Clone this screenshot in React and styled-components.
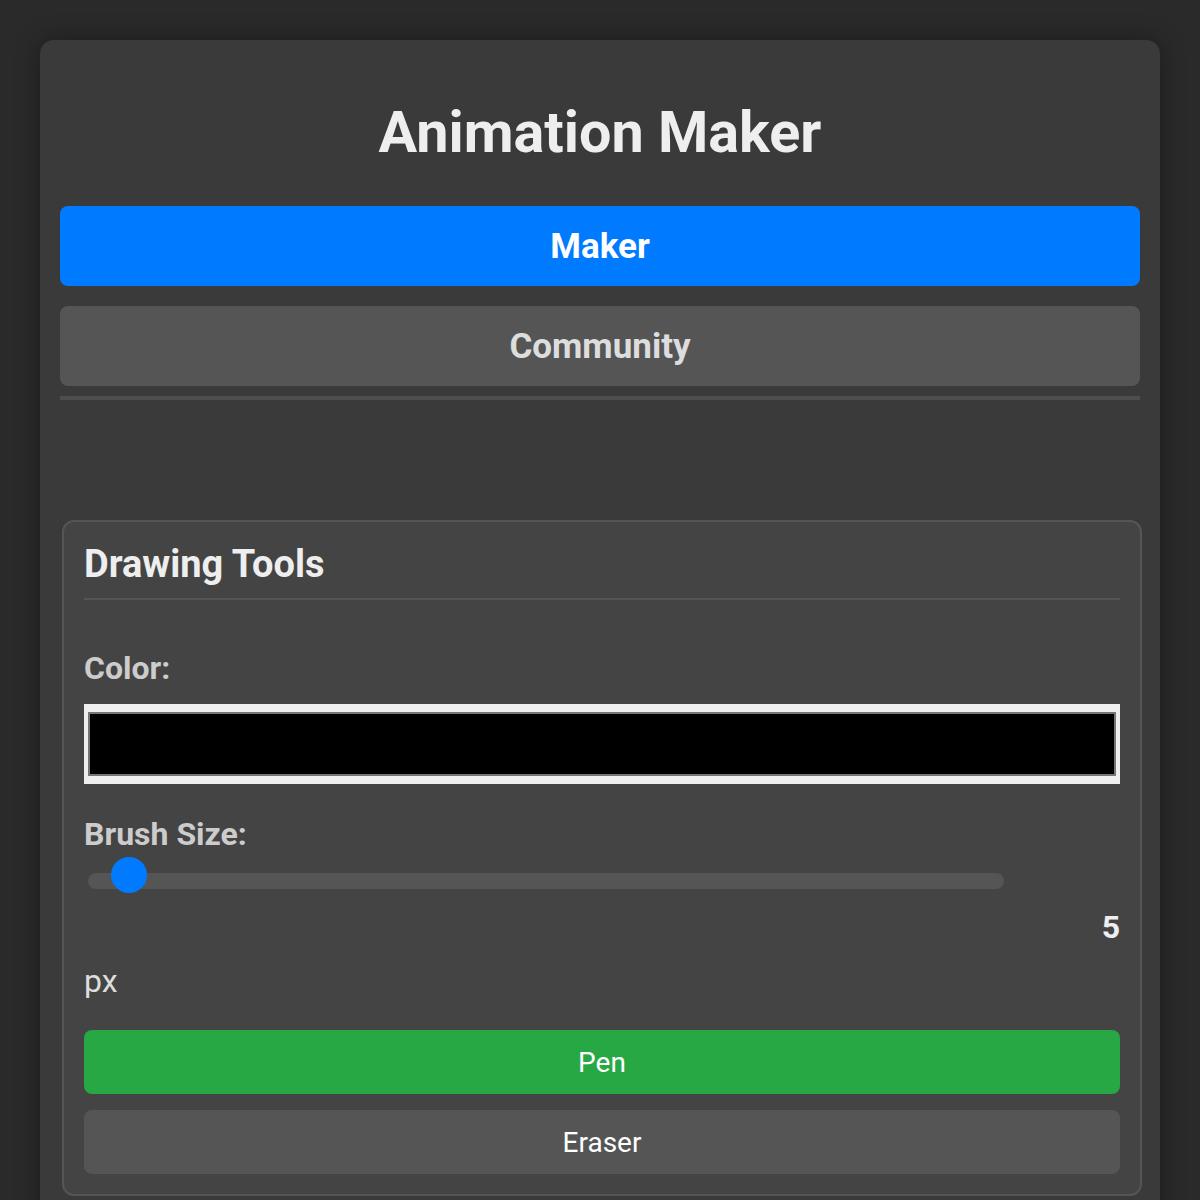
import React, { useState } from 'react';
import styled, { createGlobalStyle } from 'styled-components';

const GlobalStyle = createGlobalStyle`
  body {
    margin: 0;
    background-color: #2a2a2a;
    font-family: Roboto, 'Liberation Sans', sans-serif;
  }
`;

const Page = styled.div`
  padding: 40px 40px 0 40px;
`;

const Card = styled.div`
  background-color: #3a3a3a;
  border-radius: 14px;
  padding: 59px 20px 40px 20px;
  box-shadow: 0 0 24px rgba(0, 0, 0, 0.35);
  min-height: 1200px;
  box-sizing: border-box;
`;

const Title = styled.h1`
  margin: 0 0 39px 0;
  text-align: center;
  font-size: 57.5px;
  font-weight: 700;
  line-height: 68px;
  color: #eeeeee;
`;

const TabList = styled.div`
  display: flex;
  flex-direction: column;
  gap: 20px;
`;

const Tab = styled.button`
  height: 80px;
  border: none;
  border-radius: 8px;
  font-family: inherit;
  font-size: 35px;
  font-weight: 700;
  background-color: ${(p) => (p.active ? '#007bff' : '#555555')};
  color: ${(p) => (p.active ? '#ffffff' : '#dddddd')};
  cursor: pointer;
`;

const Divider = styled.div`
  height: 4px;
  background-color: #4e4e4e;
  margin: 10px 0 120px 0;
`;

const Panel = styled.section`
  background-color: #444444;
  border: 2px solid #555555;
  border-radius: 12px;
  padding: 20px;
  margin: 0 -2px 0 2px;
`;

const PanelTitle = styled.h3`
  margin: 0 0 50px 0;
  padding-bottom: 12px;
  border-bottom: 2px solid #555555;
  font-size: 38px;
  font-weight: 700;
  line-height: 44px;
  color: #eeeeee;
`;

const Label = styled.label`
  display: block;
  font-size: 32px;
  font-weight: 700;
  line-height: 37px;
  color: #cccccc;
  margin-bottom: ${(p) => p.gap || 0}px;
`;

const Swatch = styled.div`
  height: 80px;
  box-sizing: border-box;
  padding: 8px 4px;
  background-color: #efefef;
  margin-bottom: 32px;
  & div {
    height: 100%;
    box-sizing: border-box;
    border: 2px solid #767676;
    background-color: ${(p) => p.color};
  }
`;

const SliderWrap = styled.div`
  position: relative;
  height: 36px;
  width: 916px;
  margin: 4px 0 16px 4px;
`;

const Track = styled.div`
  position: absolute;
  top: 16px;
  left: 0;
  right: 0;
  height: 16px;
  border-radius: 8px;
  background-color: #555555;
`;

const Thumb = styled.div`
  position: absolute;
  top: 0;
  width: 36px;
  height: 36px;
  border-radius: 50%;
  background-color: #007bff;
`;

const SizeValue = styled.div`
  text-align: right;
  font-size: 32px;
  font-weight: 700;
  line-height: 37px;
  color: #eeeeee;
  margin-bottom: 17px;
`;

const Unit = styled.div`
  font-size: 32px;
  line-height: 37px;
  color: #dddddd;
  margin-bottom: 30px;
`;

const ToolButton = styled.button`
  display: block;
  width: 100%;
  height: 64px;
  border: none;
  border-radius: 8px;
  font-family: inherit;
  font-size: 28px;
  color: #ffffff;
  background-color: ${(p) => (p.active ? '#28a745' : '#555555')};
  margin-top: ${(p) => (p.first ? 0 : 16)}px;
  cursor: pointer;
`;

export default function App() {
  const [tab, setTab] = useState('maker');
  const [tool, setTool] = useState('pen');
  const [size] = useState(5);

  return (
    <Page>
      <GlobalStyle />
      <Card>
        <Title>Animation Maker</Title>
        <TabList>
          <Tab active={tab === 'maker'} onClick={() => setTab('maker')}>Maker</Tab>
          <Tab active={tab === 'community'} onClick={() => setTab('community')}>Community</Tab>
        </TabList>
        <Divider />
        <Panel>
          <PanelTitle>Drawing Tools</PanelTitle>
          <Label gap={17}>Color:</Label>
          <Swatch color="#000000"><div /></Swatch>
          <Label>Brush Size:</Label>
          <SliderWrap>
            <Track />
            <Thumb style={{ left: 23 }} />
          </SliderWrap>
          <SizeValue>{size}</SizeValue>
          <Unit>px</Unit>
          <ToolButton first active={tool === 'pen'} onClick={() => setTool('pen')}>Pen</ToolButton>
          <ToolButton active={tool === 'eraser'} onClick={() => setTool('eraser')}>Eraser</ToolButton>
        </Panel>
      </Card>
    </Page>
  );
}
